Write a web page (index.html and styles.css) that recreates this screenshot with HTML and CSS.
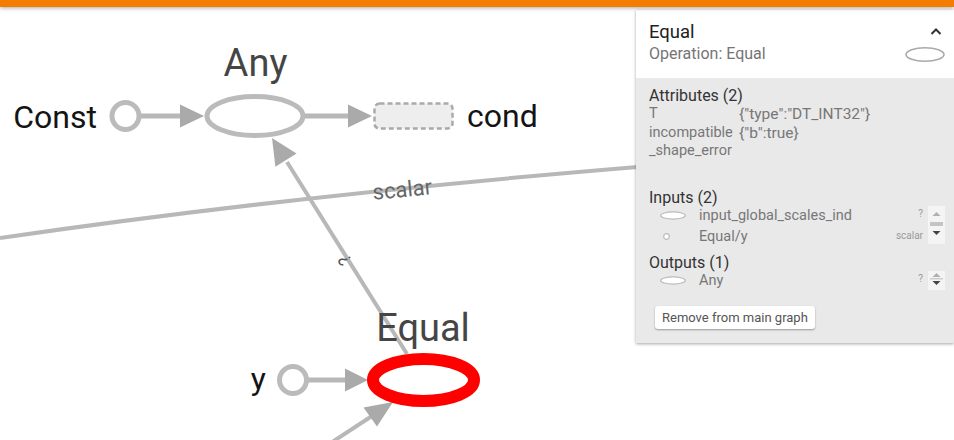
FILE: index.html
```html
<!DOCTYPE html>
<html>
<head>
<meta charset="utf-8">
<link rel="stylesheet" href="styles.css">
</head>
<body>
<div class="app">
  <div class="topbar"></div>
  <svg class="graph" width="954" height="440" viewBox="0 0 954 440">
    <g class="edges" fill="none" stroke="#b8b8b8">
      <path d="M0,238 Q320,191.5 700,162" stroke-width="4"/>
      <line x1="141" y1="116" x2="184" y2="116" stroke-width="5"/>
      <line x1="303" y1="116" x2="352" y2="116" stroke-width="5"/>
      <line x1="407" y1="354" x2="287" y2="162" stroke-width="4"/>
      <line x1="308" y1="380" x2="348" y2="380" stroke-width="5"/>
      <line x1="320" y1="450" x2="372" y2="416" stroke-width="4"/>
    </g>
    <g class="arrows" fill="#aaaaaa">
      <polygon points="180,104.5 204,116 180,127.5"/>
      <polygon points="348,104.5 372,116 348,127.5"/>
      <polygon points="272,138 296.5,153.4 275.4,166.8"/>
      <polygon points="345,368.5 368,380 345,391.5"/>
      <polygon points="393,402 377,426.5 363.5,407.5"/>
    </g>
    <text class="edge-label" x="403" y="197" transform="rotate(-5.5 403 197)">scalar</text>
    <text class="edge-q" x="345" y="266" transform="rotate(-122 345 260)">?</text>
    <circle cx="125.5" cy="116" r="13.5" fill="#fff" stroke="#bbbbbb" stroke-width="5"/>
    <ellipse cx="255" cy="116" rx="48" ry="19.5" fill="#fff" stroke="#bbbbbb" stroke-width="5"/>
    <rect x="374.5" y="103.5" width="78" height="25" rx="5" fill="#eeeeee" stroke="#aaaaaa" stroke-width="2.5" stroke-dasharray="5 3"/>
    <circle cx="293" cy="380" r="13.5" fill="#fff" stroke="#bbbbbb" stroke-width="5"/>
    <ellipse cx="423.5" cy="380" rx="50.5" ry="21" fill="#fff" stroke="#ff0000" stroke-width="12"/>
    <text class="op-label" x="255.5" y="76" text-anchor="middle">Any</text>
    <text class="op-label" x="423" y="341" text-anchor="middle">Equal</text>
    <text class="const-label" x="97" y="128" text-anchor="end">Const</text>
    <text class="const-label" x="467" y="127">cond</text>
    <text class="const-label" x="266" y="390" text-anchor="end">y</text>
  </svg>

  <aside class="panel">
    <div class="panel-header">
      <div class="titles">
        <div class="title">Equal</div>
        <div class="subtitle">Operation: Equal</div>
      </div>
      <div class="header-icons">
        <svg class="caret" width="12" height="8" viewBox="0 0 12 8"><polyline points="1.5,7 6,2.5 10.5,7" fill="none" stroke="#333" stroke-width="2"/></svg>
        <svg class="op-icon" width="42" height="17" viewBox="0 0 42 17"><ellipse cx="21" cy="8.5" rx="19" ry="6.8" fill="#fff" stroke="#aaaaaa" stroke-width="1.6"/></svg>
      </div>
    </div>
    <div class="panel-body">
      <div class="section-title">Attributes (2)</div>
      <div class="attrs">
        <span class="key">T</span><span class="val">{"type":"DT_INT32"}</span>
        <span class="key">incompatible</span><span class="val">{"b":true}</span>
        <span class="key">_shape_error</span><span class="val"></span>
      </div>

      <div class="section-title inputs-title">Inputs (2)</div>
      <div class="io-block">
        <div class="io-list">
          <div class="io-row">
            <span class="io-icon"><svg width="26" height="9" viewBox="0 0 26 9"><ellipse cx="13" cy="4.5" rx="12.3" ry="3.6" fill="#fff" stroke="#bbbbbb" stroke-width="1.2"/></svg></span>
            <span class="io-name">input_global_scales_ind</span>
            <span class="io-meta">?</span>
          </div>
          <div class="io-row">
            <span class="io-icon"><svg width="26" height="9" viewBox="0 0 26 9"><circle cx="6.5" cy="4.5" r="2.8" fill="#fff" stroke="#bbbbbb" stroke-width="1.2"/></svg></span>
            <span class="io-name">Equal/y</span>
            <span class="io-meta">scalar</span>
          </div>
        </div>
        <div class="io-scroll">
          <svg width="17" height="38" viewBox="0 0 17 38">
            <polygon points="4.5,10 8.5,6 12.5,10" fill="#b0b0b0"/>
            <rect x="2" y="16" width="13" height="4" fill="#c4c4c4"/>
            <polygon points="4.5,25 12.5,25 8.5,29" fill="#444"/>
          </svg>
        </div>
      </div>

      <div class="section-title outputs-title">Outputs (1)</div>
      <div class="io-block">
        <div class="io-list">
          <div class="io-row">
            <span class="io-icon"><svg width="26" height="9" viewBox="0 0 26 9"><ellipse cx="13" cy="4.5" rx="12.3" ry="3.6" fill="#fff" stroke="#bbbbbb" stroke-width="1.2"/></svg></span>
            <span class="io-name">Any</span>
            <span class="io-meta">?</span>
          </div>
        </div>
        <div class="io-scroll">
          <svg width="17" height="19" viewBox="0 0 17 19">
            <polygon points="4.5,6 8.5,2 12.5,6" fill="#b0b0b0"/>
            <rect x="2" y="7.3" width="13" height="1" fill="#bbbbbb"/>
            <polygon points="4.5,10 12.5,10 8.5,14" fill="#444"/>
          </svg>
        </div>
      </div>

      <button class="remove-btn">Remove from main graph</button>
    </div>
  </aside>
</div>
</body>
</html>
```

FILE: styles.css
```css
html, body {
  margin: 0;
  padding: 0;
  background: #ffffff;
}

.app {
  position: relative;
  width: 954px;
  height: 440px;
  overflow: hidden;
  font-family: Roboto, "Liberation Sans", sans-serif;
}

.topbar {
  position: relative;
  z-index: 3;
  height: 7px;
  background: #f57c00;
  box-shadow: 0 1px 4px rgba(0, 0, 0, 0.35);
}

.graph {
  position: absolute;
  top: 0;
  left: 0;
  z-index: 1;
}

.op-label {
  font-family: Roboto, "Liberation Sans", sans-serif;
  font-size: 38px;
  fill: #454545;
}

.const-label {
  font-family: Roboto, "Liberation Sans", sans-serif;
  font-size: 32px;
  fill: #141414;
}

.edge-label {
  font-family: Roboto, "Liberation Sans", sans-serif;
  font-size: 22px;
  fill: #666666;
  text-anchor: middle;
}

.edge-q {
  font-family: Roboto, "Liberation Sans", sans-serif;
  font-size: 18px;
  fill: #555555;
  text-anchor: middle;
}

.panel {
  position: absolute;
  top: 10px;
  right: 0;
  z-index: 2;
  width: 318px;
  background: #e9e9e9;
  box-shadow: 0 1px 3px rgba(0, 0, 0, 0.35);
}

.panel-header {
  display: flex;
  justify-content: space-between;
  align-items: flex-start;
  background: #ffffff;
  padding: 11px 8px 14px 13px;
}

.title {
  font-size: 18.5px;
  line-height: 22px;
  color: #212121;
}

.subtitle {
  font-size: 16px;
  line-height: 21px;
  color: #757575;
}

.header-icons {
  display: flex;
  flex-direction: column;
  align-items: flex-end;
  width: 42px;
  padding-top: 6px;
}

.caret {
  display: block;
  margin-right: 4px;
}

.op-icon {
  display: block;
  margin-top: 11px;
}

.panel-body {
  padding: 8px 9px 14px 13px;
}

.section-title {
  font-size: 16px;
  line-height: 19px;
  color: #333333;
}

.attrs {
  display: grid;
  grid-template-columns: 89px 1fr;
  font-size: 15.5px;
  line-height: 18.5px;
  color: #777777;
  white-space: nowrap;
}

.attrs .key {
  font-size: 14.5px;
}

.attrs .val {
  padding-left: 1px;
}

.inputs-title {
  margin-top: 29.5px;
  line-height: 16px;
}

.outputs-title {
  margin-top: 11px;
  line-height: 16px;
}

.io-block {
  display: flex;
  gap: 4px;
}

.io-list {
  flex: 1;
}

.io-row {
  display: grid;
  grid-template-columns: 26px 1fr auto;
  column-gap: 13px;
  align-items: center;
  padding-left: 11px;
  height: 19px;
  font-size: 14.5px;
  line-height: 19px;
  color: #777777;
}

.io-icon svg {
  display: block;
}

.io-meta {
  font-size: 10px;
  color: #999999;
  padding-right: 1px;
  align-self: start;
  line-height: 16px;
}

.io-row + .io-row .io-meta {
  line-height: 22px;
}

.io-scroll {
  width: 17px;
  background: #f4f4f4;
}

.io-scroll svg {
  display: block;
}

.remove-btn {
  display: block;
  margin: 16px 0 0 6px;
  height: 23px;
  padding: 0 7px;
  border: none;
  border-radius: 3px;
  background: #ffffff;
  box-shadow: 0 1px 2px rgba(0, 0, 0, 0.35);
  font-family: Roboto, "Liberation Sans", sans-serif;
  font-size: 13px;
  line-height: 23px;
  color: #555555;
}
```
